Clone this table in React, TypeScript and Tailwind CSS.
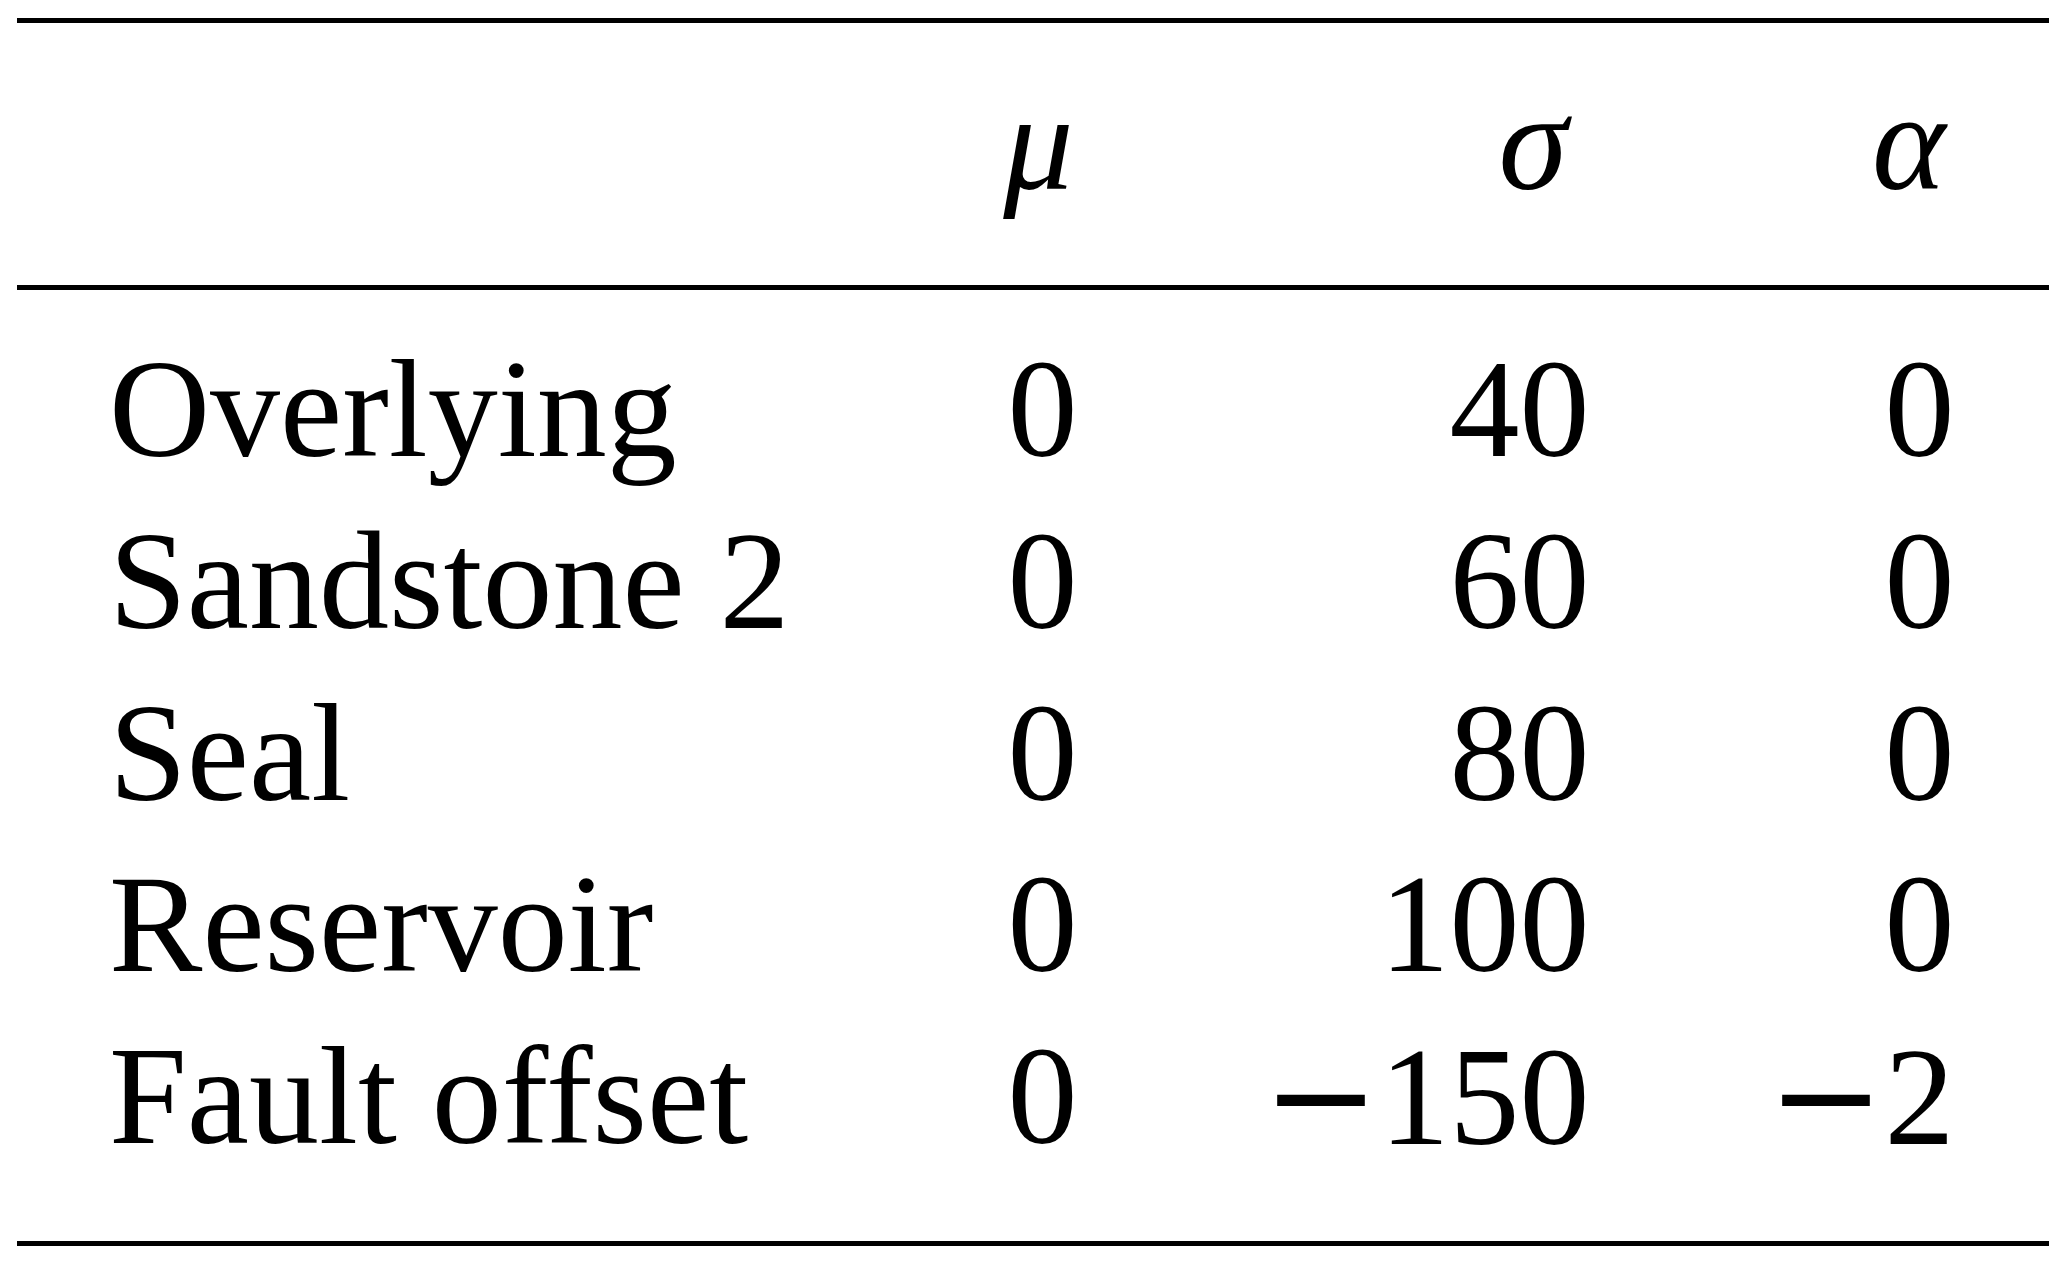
const rows: [string, string, string, string][] = [
  ["Overlying", "0", "40", "0"],
  ["Sandstone 2", "0", "60", "0"],
  ["Seal", "0", "80", "0"],
  ["Reservoir", "0", "100", "0"],
  ["Fault offset", "0", "-150", "-2"],
];

const cols = "grid grid-cols-[1fr_200px_512px_365px] pl-[92px] pr-[94.5px]";

// typeset minus is wider than the text-font hyphen
function Num({ value }: { value: string }) {
  if (!value.startsWith("-")) return <>{value}</>;
  return (
    <>
      <span className="font-['DejaVu_Serif',serif]">−</span>
      {value.slice(1)}
    </>
  );
}

export default function App() {
  return (
    <div className="min-h-[1265px] bg-white pt-[18px] text-black font-['Liberation_Serif',serif] text-[140px] leading-[171.7px]">
      <div className="ml-[17px] w-[2032px]">
        <div className="h-[5px] bg-black" />

        {/* header */}
        <div className={`${cols} pt-[33px] pb-[57.5px]`}>
          <div />
          <div className="pr-[4px] text-right italic">μ</div>
          <div className="pr-[22px] text-right italic">σ</div>
          <div className="pr-[9px] text-right italic">α</div>
        </div>

        <div className="h-[5px] bg-black" />

        {/* body */}
        <div className="pt-[33px] pb-[58.5px]">
          {rows.map(([name, mu, sigma, alpha]) => (
            <div key={name} className={cols}>
              <div className="whitespace-nowrap">{name}</div>
              <div className="text-right">
                <Num value={mu} />
              </div>
              <div className="text-right">
                <Num value={sigma} />
              </div>
              <div className="text-right">
                <Num value={alpha} />
              </div>
            </div>
          ))}
        </div>

        <div className="h-[5px] bg-black" />
      </div>
    </div>
  );
}
